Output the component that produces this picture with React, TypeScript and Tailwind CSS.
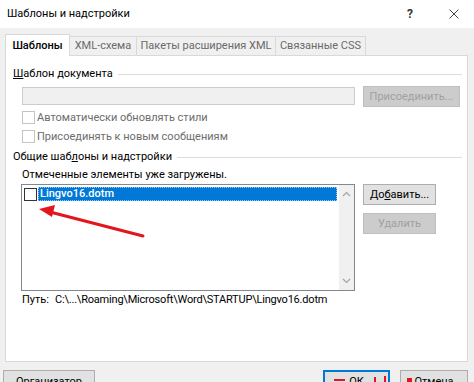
import React from "react";

const font = { fontFamily: 'Roboto, "Noto Sans", sans-serif' };

function GroupHeader({ children }: { children: React.ReactNode }) {
  return (
    <div className="flex h-[16px] items-center pl-[7px] pr-[5px]">
      <span className="text-[11px] leading-[16px] text-black whitespace-nowrap">{children}</span>
      <div className="ml-[5px] h-px flex-1 bg-[#dcdcdc]" />
    </div>
  );
}

function Check({ label }: { label: string }) {
  return (
    <div className="flex h-[19px] items-center pl-[16px]">
      <div className="h-[13px] w-[13px] border border-[#c4c4c4] bg-white" />
      <span className="ml-[2px] text-[11px] leading-[16px] text-[#6d6d6d]">{label}</span>
    </div>
  );
}

export default function App() {
  return (
    <div className="relative h-[382px] w-[474px] overflow-hidden bg-[#f0f0f0]" style={font}>
      {/* title bar */}
      <div className="flex h-[28px] items-center bg-white pl-[7px]">
        <span className="text-[11px] leading-[16px] text-black">Шаблоны и надстройки</span>
        <span className="ml-auto mr-[36px] text-[12px] font-bold leading-[16px] text-[#333]">?</span>
        <svg className="mr-[15px]" width="10" height="10" viewBox="0 0 10 10">
          <path d="M0.5 0.5 L9.5 9.5 M9.5 0.5 L0.5 9.5" stroke="#444" strokeWidth="1" fill="none" />
        </svg>
      </div>

      <div className="px-[5px] pt-[6px]">
        {/* tabs */}
        <div className="relative z-10 flex h-[21px] items-end">
          <div className="-mb-px flex h-[22px] w-[65px] items-center justify-center border border-b-0 border-[#d9d9d9] bg-white">
            <span className="text-[11px] font-medium leading-[16px] text-black">Шаблоны</span>
          </div>
          <div className="flex h-[19px] w-[67px] items-center justify-center border border-l-0 border-b-0 border-[#d9d9d9] bg-[#f0f0f0]">
            <span className="text-[11px] leading-[16px] text-[#6a6a6a]">XML-схема</span>
          </div>
          <div className="flex h-[19px] w-[139px] items-center justify-center border border-l-0 border-b-0 border-[#d9d9d9] bg-[#f0f0f0]">
            <span className="whitespace-nowrap text-[11px] leading-[16px] text-[#6a6a6a]">Пакеты расширения XML</span>
          </div>
          <div className="flex h-[19px] w-[90px] items-center justify-center border border-l-0 border-b-0 border-[#d9d9d9] bg-[#f0f0f0]">
            <span className="whitespace-nowrap text-[11px] leading-[16px] text-[#6a6a6a]">Связанные CSS</span>
          </div>
        </div>

        {/* panel */}
        <div className="relative h-[307px] w-[463px] border border-[#d9d9d9] bg-white">
          <div className="pt-[10px]">
            <GroupHeader>
              <span className="underline">Ш</span>аблон документа
            </GroupHeader>

            <div className="mt-[4px] flex items-start pl-[16px]">
              <div className="mt-[1px] h-[18px] w-[333px] border border-[#cccccc] bg-[#f0f0f0]" />
              <div className="ml-[8px] flex h-[21px] w-[97px] items-center justify-center border border-[#bfbfbf] bg-[#cccccc]">
                <span className="text-[11px] leading-[16px] text-[#a0a0a0]">Присоединить...</span>
              </div>
            </div>

            <div className="mt-[1px]">
              <Check label="Автоматически обновлять стили" />
              <Check label="Присоединять к новым сообщениям" />
            </div>

            <div className="mt-[3px]">
              <GroupHeader>
                Общие шаб<span className="underline">л</span>оны и надстройки
              </GroupHeader>
            </div>

            <div className="mt-[2px] pl-[16px] text-[11px] leading-[16px] text-black">
              Отмеченные элементы уже загружены.
            </div>

            <div className="mt-[1px] flex items-start pl-[15px]">
              <div className="flex h-[107px] w-[334px] border border-[#828790] bg-white">
                <div className="flex-1 pl-[2px] pt-[2px]">
                  <div className="flex h-[14px] items-center">
                    <div className="h-[13px] w-[13px] border border-[#333] bg-white" />
                    <div className="ml-[1px] flex h-[14px] flex-1 items-center border border-dotted border-[#9cc9f2] bg-[#0078d7] pl-[1px]">
                      <span className="text-[11px] font-medium leading-[14px] text-white">Lingvo16.dotm</span>
                    </div>
                  </div>
                </div>
                <div className="ml-[2px] flex w-[15px] flex-col items-center justify-between bg-[#f0f0f0] py-[6px]">
                  <svg width="9" height="6" viewBox="0 0 9 6">
                    <path d="M1 5 L4.5 1.5 L8 5" stroke="#a3a3a3" strokeWidth="1.2" fill="none" />
                  </svg>
                  <svg width="9" height="6" viewBox="0 0 9 6">
                    <path d="M1 1 L4.5 4.5 L8 1" stroke="#a3a3a3" strokeWidth="1.2" fill="none" />
                  </svg>
                </div>
              </div>
              <div className="ml-[8px] flex flex-col">
                <div className="flex h-[21px] w-[73px] items-center justify-center border border-[#adadad] bg-[#e1e1e1]">
                  <span className="text-[11px] leading-[16px] text-black">
                    До<span className="underline">б</span>авить...
                  </span>
                </div>
                <div className="mt-[8px] flex h-[21px] w-[73px] items-center justify-center border border-[#bfbfbf] bg-[#cccccc]">
                  <span className="text-[11px] leading-[16px] text-[#a0a0a0]">Удалить</span>
                </div>
              </div>
            </div>

            <div className="mt-[1px] flex pl-[16px] text-[11px] leading-[16px] text-black">
              <span className="w-[33px]">Путь:</span>
              <span className="tracking-[-0.2px]">C:\...\Roaming\Microsoft\Word\STARTUP\Lingvo16.dotm</span>
            </div>
          </div>
        </div>
      </div>

      {/* bottom buttons */}
      <div className="mt-[8px] flex pl-[3px]">
        <div className="flex h-[23px] w-[92px] items-center justify-center border border-[#adadad] bg-[#e1e1e1]">
          <span className="text-[11px] leading-[16px] text-black">Организатор</span>
        </div>
        <div className="ml-auto flex h-[23px] w-[67px] items-center justify-center border-2 border-[#0078d7] bg-[#e1e1e1]">
          <span className="text-[11px] leading-[16px] text-black">ОК</span>
        </div>
        <div className="ml-[10px] mr-[6px] flex h-[23px] w-[68px] items-center justify-center border border-[#adadad] bg-[#e1e1e1]">
          <span className="text-[11px] leading-[16px] text-black">Отмена</span>
        </div>
      </div>

      {/* red annotation marks */}
      <svg className="pointer-events-none absolute left-0 top-0" width="474" height="382" viewBox="0 0 474 382">
        <line x1="143" y1="236" x2="50" y2="212" stroke="#e3161f" strokeWidth="3" strokeLinecap="round" />
        <polygon points="39,209 55,205 52,217" fill="#e3161f" />
        <line x1="334" y1="380" x2="345" y2="380" stroke="#e3161f" strokeWidth="2" />
        <rect x="374" y="377" width="2" height="5" fill="#e3161f" />
        <rect x="384" y="376" width="2" height="6" fill="#e3161f" />
        <rect x="407" y="378" width="5" height="4" fill="#e3161f" />
      </svg>
    </div>
  );
}
